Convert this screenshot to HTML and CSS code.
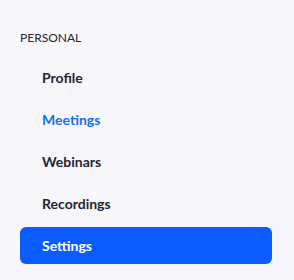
FILE: index.html
```html
<!DOCTYPE html>
<html lang="en">
<head>
    <meta charset="UTF-8">
    <meta name="viewport" content="width=device-width, initial-scale=1.0">
    <title>Personal</title>
    <link rel="stylesheet" href="styles.css">
</head>
<body>
    <nav class="sidebar">
        <div class="section-title">PERSONAL</div>
        <ul class="nav-list">
            <li><a href="#" class="nav-item">Profile</a></li>
            <li><a href="#" class="nav-item current">Meetings</a></li>
            <li><a href="#" class="nav-item">Webinars</a></li>
            <li><a href="#" class="nav-item">Recordings</a></li>
            <li><a href="#" class="nav-item active">Settings</a></li>
        </ul>
    </nav>
</body>
</html>
```

FILE: styles.css
```css
* {
    margin: 0;
    padding: 0;
    box-sizing: border-box;
    font-family: Lato, 'Open Sans', sans-serif;
}

body {
    background-color: #f7f7fa;
    height: 100vh;
}

.sidebar {
    padding: 30px 22px 0 20px;
}

.section-title {
    font-size: 12px;
    line-height: 16px;
    color: #232333;
}

.nav-list {
    list-style: none;
    margin-top: 13px;
}

.nav-item {
    display: block;
    height: 37px;
    line-height: 37px;
    margin-top: 5px;
    padding-left: 22px;
    border-radius: 6px;
    font-size: 14px;
    font-weight: 700;
    color: #232333;
    text-decoration: none;
}

.nav-item.current {
    color: #0e72ed;
}

.nav-item.active {
    background-color: #0b5cff;
    color: white;
}
```
